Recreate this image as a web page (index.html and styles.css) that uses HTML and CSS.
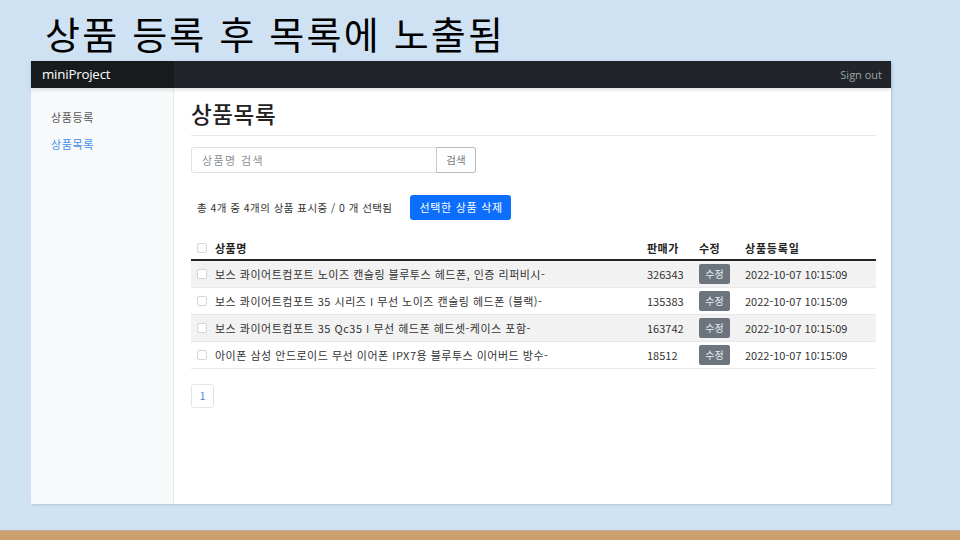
FILE: index.html
```html
<!DOCTYPE html>
<html lang="ko">
<head>
<meta charset="utf-8">
<link rel="stylesheet" href="styles.css">
</head>
<body>
<div class="slide">
  <h1 class="slide-title">상품 등록 후 목록에 노출됨</h1>
  <div class="window">
    <header class="navbar">
      <div class="brand">miniProject</div>
      <div class="nav-right">Sign out</div>
    </header>
    <div class="body">
      <nav class="sidebar">
        <div class="side-link">상품등록</div>
        <div class="side-link active">상품목록</div>
      </nav>
      <main class="main">
        <h2 class="page-title">상품목록</h2>
        <div class="search">
          <div class="search-input">상품명 검색</div>
          <div class="search-btn">검색</div>
        </div>
        <div class="summary">
          <span class="summary-text">총 4개 중 4개의 상품 표시중 / 0 개 선택됨</span>
          <span class="btn-primary">선택한 상품 삭제</span>
        </div>
        <table class="table">
          <thead>
            <tr><th class="c-chk"><span class="chk"></span></th><th class="c-name">상품명</th><th class="c-price">판매가</th><th class="c-edit">수정</th><th class="c-date">상품등록일</th></tr>
          </thead>
          <tbody>
            <tr class="odd"><td class="c-chk"><span class="chk"></span></td><td class="name">보스 콰이어트컴포트 노이즈 캔슬링 블루투스 헤드폰, 인증 리퍼비시-</td><td>326343</td><td><span class="btn-edit">수정</span></td><td>2022-10-07 10:15:09</td></tr>
            <tr><td class="c-chk"><span class="chk"></span></td><td class="name">보스 콰이어트컴포트 35 시리즈 I 무선 노이즈 캔슬링 헤드폰 (블랙)-</td><td>135383</td><td><span class="btn-edit">수정</span></td><td>2022-10-07 10:15:09</td></tr>
            <tr class="odd"><td class="c-chk"><span class="chk"></span></td><td class="name">보스 콰이어트컴포트 35 Qc35 I 무선 헤드폰 헤드셋-케이스 포함-</td><td>163742</td><td><span class="btn-edit">수정</span></td><td>2022-10-07 10:15:09</td></tr>
            <tr><td class="c-chk"><span class="chk"></span></td><td class="name">아이폰 삼성 안드로이드 무선 이어폰 IPX7용 블루투스 이어버드 방수-</td><td>18512</td><td><span class="btn-edit">수정</span></td><td>2022-10-07 10:15:09</td></tr>
          </tbody>
        </table>
        <div class="pagination"><span class="page">1</span></div>
      </main>
    </div>
  </div>
  <div class="spacer"></div>
  <div class="footer-bar"></div>
</div>
</body>
</html>
```
FILE: styles.css
```css
* { box-sizing: border-box; }
html, body { margin: 0; padding: 0; }
body {
  width: 960px;
  height: 540px;
  overflow: hidden;
  background: #cfe2f3;
  font-family: "Noto Sans CJK KR", "Noto Sans", sans-serif;
}
.slide {
  display: flex;
  flex-direction: column;
  height: 540px;
}
.slide-title {
  margin: 0;
  height: 61px;
  padding: 10px 0 0 45px;
  font-weight: 400;
  font-size: 38px;
  line-height: 46px;
  color: #000;
  letter-spacing: 2.2px;
}
.window {
  margin-left: 31px;
  width: 860px;
  height: 443px;
  background: #fff;
  display: flex;
  flex-direction: column;
  box-shadow: 1px 1px 2px rgba(120,140,160,0.35);
}
.navbar {
  height: 27px;
  background: #212529;
  display: flex;
  align-items: center;
  justify-content: space-between;
  box-shadow: 0 2px 4px rgba(0,0,0,0.12);
  position: relative;
  z-index: 1;
}
.brand {
  width: 143px;
  height: 27px;
  background: #181b1e;
  color: #fff;
  font-family: "Open Sans", "Noto Sans", sans-serif;
  font-size: 13.3px;
  line-height: 27px;
  padding-left: 11px;
  letter-spacing: -0.2px;
}
.nav-right {
  color: #9ea3a8;
  font-family: "Open Sans", "Noto Sans", sans-serif;
  font-size: 11px;
  padding-right: 9px;
}
.body {
  flex: 1;
  display: flex;
}
.sidebar {
  width: 143px;
  background: #f8f9fa;
  border-right: 1px solid #e9ecef;
  padding-top: 21px;
  padding-left: 20px;
}
.side-link {
  font-size: 11px;
  letter-spacing: 0.6px;
  color: #555;
  height: 27px;
  line-height: 16px;
}
.side-link.active { color: #3f8ee8; }
.main {
  flex: 1;
  padding: 0 15px 0 17px;
}
.page-title {
  margin: 0;
  font-size: 22.5px;
  font-weight: 500;
  color: #222;
  line-height: 28px;
  padding-top: 11px;
  padding-bottom: 8px;
  border-bottom: 1px solid #e5e7ea;
  letter-spacing: 0.6px;
}
.search {
  display: flex;
  margin-top: 11px;
  height: 26px;
}
.search-input {
  width: 246px;
  border: 1px solid #dee2e6;
  border-radius: 3px 0 0 3px;
  font-size: 11px;
  letter-spacing: 1.4px;
  color: #8a8f94;
  line-height: 24px;
  padding-left: 10px;
}
.search-btn {
  width: 40px;
  border: 1px solid #b8bcc0;
  border-left-color: #c8ccd0;
  border-radius: 0 3px 3px 0;
  font-size: 10.5px;
  color: #777;
  line-height: 24px;
  text-align: center;
  margin-left: -1px;
}
.summary {
  display: flex;
  align-items: center;
  margin-top: 22px;
  padding-left: 6px;
  height: 25px;
}
.summary-text {
  font-size: 10.5px;
  letter-spacing: 0.45px;
  color: #333;
  margin-right: 18px;
}
.btn-primary {
  background: #0d6efd;
  color: #fff;
  font-size: 11px;
  letter-spacing: 0.7px;
  border-radius: 3px;
  height: 25px;
  line-height: 25px;
  padding: 0 8px 0 9px;
}
.table {
  margin-top: 16px;
  width: 685px;
  border-collapse: collapse;
  font-size: 11px;
  color: #333;
}
.table th {
  text-align: left;
  font-weight: 700;
  color: #222;
  height: 24px;
  border-bottom: 2px solid #212529;
  padding: 0;
  vertical-align: middle;
  letter-spacing: 0.5px;
}
.table th.c-date { letter-spacing: 0.8px; }
.table td {
  height: 27px;
  padding: 0;
  border-bottom: 1px solid #e6e8ea;
  vertical-align: middle;
  white-space: nowrap;
}
.table td.name { letter-spacing: 0.5px; }
.table tr.odd td { background: #f2f2f2; }
.c-chk { width: 24px; padding-left: 3px !important; }
.c-name { width: 432px; }
.c-price { width: 52px; }
.c-edit { width: 46px; }
.chk {
  display: block;
  width: 10px;
  height: 10px;
  border: 1px solid #d3d6d9;
  border-radius: 2px;
  background: #fff;
  margin-left: 3px;
}
.btn-edit {
  display: inline-block;
  background: #6c757d;
  color: #e8eaec;
  font-size: 10px;
  height: 20px;
  line-height: 20px;
  width: 31px;
  text-align: center;
  border-radius: 2px;
}
.pagination {
  margin-top: 12px;
}
.page {
  display: inline-block;
  width: 23px;
  height: 24px;
  border: 1px solid #e3e6e9;
  border-radius: 3px;
  color: #3f7ed8;
  font-size: 10px;
  line-height: 22px;
  text-align: center;
}
.spacer { flex: 1; }
.footer-bar {
  height: 10px;
  background: #c9a06e;
  border-top: 1px solid #bfae93;
}
```
